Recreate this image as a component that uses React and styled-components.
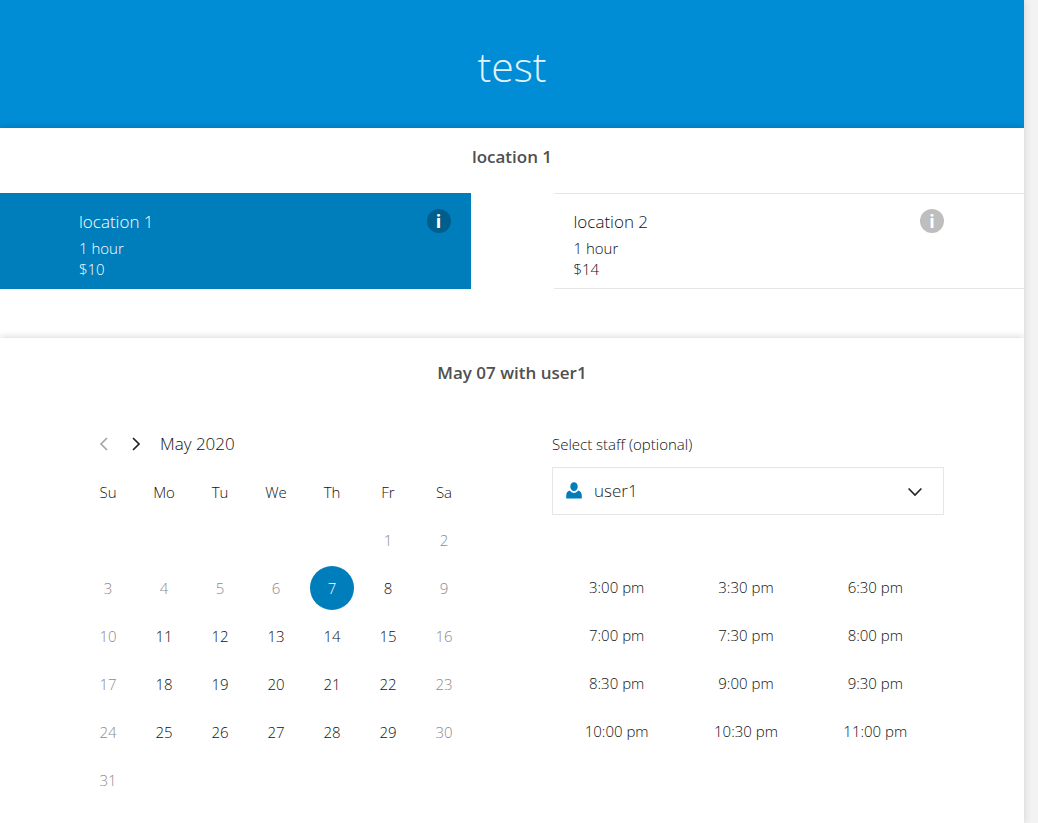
import React, { useState } from "react";
import styled, { createGlobalStyle, css } from "styled-components";

const GlobalStyle = createGlobalStyle`
  *, *::before, *::after { box-sizing: border-box; }
  body {
    margin: 0;
    background: #f3f3f3;
    color: #111;
    font-family: "Open Sans", "Noto Sans", sans-serif;
    font-size: 15px;
    font-weight: 300;
    line-height: 20px;
  }
  button, select { font: inherit; color: inherit; }
`;

const Page = styled.main`
  margin-right: 14px;
  min-height: 100vh;
  display: flex;
  flex-direction: column;
  background: #fff;
  box-shadow: 0 0 8px rgba(0, 0, 0, 0.15);
`;

const Header = styled.header`
  height: 128px;
  display: flex;
  align-items: center;
  justify-content: center;
  padding-top: 4px;
  background: #008dd5;
`;

const BusinessName = styled.h1`
  margin: 0;
  color: #e2f3fc;
  font-size: 41px;
  font-weight: 300;
  line-height: 60px;
`;

const Section = styled.section`
  background: #fff;
  box-shadow: 0 0 8px rgba(0, 0, 0, 0.2);
  clip-path: inset(-8px 0 0 0);
  ${(p) => p.$grow && css`flex: 1;`}
`;

const SectionTitle = styled.h2`
  margin: 0;
  padding: ${(p) => (p.$roomy ? "23px 0 35px" : "17px 0 24px")};
  color: #505050;
  font-size: 17px;
  font-weight: 600;
  line-height: 24px;
  text-align: center;
`;

const Locations = styled.div`
  display: grid;
  grid-template-columns: 1fr 1fr;
  column-gap: 83px;
  padding-bottom: 49px;
`;

const LocationCard = styled.article`
  height: 96px;
  display: flex;
  align-items: flex-start;
  justify-content: space-between;
  padding: 15px 20px;
  border-top: 1px solid #e6e6e6;
  border-bottom: 1px solid #e6e6e6;
  &:first-child { padding-left: 79px; }
  &:last-child { padding-right: 80px; }
  ${(p) => p.$selected && css`
    color: #fff;
    background: #007dbb;
    border-color: #007dbb;
  `}
`;

const LocationName = styled.h3`
  margin: 0 0 3px;
  font-size: 17px;
  font-weight: 300;
  line-height: 26px;
`;

const LocationDetail = styled.p`
  margin: 0;
  line-height: 21px;
`;

const InfoButton = styled.button`
  width: 24px;
  height: 24px;
  padding: 0;
  border: 0;
  border-radius: 50%;
  color: #fff;
  background: ${(p) => (p.$selected ? "#005e8c" : "#bebebe")};
  font-size: 18px;
  font-weight: 700;
  line-height: 22px;
`;

const Booking = styled.div`
  display: grid;
  grid-template-columns: 1fr 1fr;
  column-gap: 80px;
  padding: 0 80px 16px;
`;

const MonthBar = styled.div`
  height: 48px;
  display: flex;
  align-items: center;
  padding-left: 8px;
`;

const MonthButton = styled.button`
  width: 32px;
  height: 32px;
  display: grid;
  place-items: center;
  padding: 0;
  border: 0;
  background: none;
  color: ${(p) => (p.disabled ? "#a6a6a6" : "#222")};
`;

const MonthName = styled.h3`
  margin: 0 0 0 8px;
  font-size: 17px;
  font-weight: 300;
  line-height: 24px;
`;

const Calendar = styled.table`
  width: 100%;
  table-layout: fixed;
  border-collapse: collapse;
`;

const Weekday = styled.th`
  height: 48px;
  padding: 0;
  font-weight: 300;
  text-align: center;
`;

const DayCell = styled.td`
  height: 48px;
  padding: 0;
  text-align: center;
`;

const DayButton = styled.button`
  width: 44px;
  height: 44px;
  display: block;
  margin: 0 auto;
  padding: 0;
  border: 0;
  border-radius: 50%;
  background: ${(p) => (p.$selected ? "#007dbb" : "none")};
  color: ${(p) => (p.$selected ? "#fff" : p.disabled ? "#8c8c8c" : "#111")};
`;

const StaffLabel = styled.label`
  display: block;
  padding: 14px 0 13px;
`;

const StaffField = styled.div`
  position: relative;
  color: #222;
`;

const StaffSelect = styled.select`
  width: 100%;
  height: 48px;
  padding: 0 40px 0 41px;
  border: 1px solid #e6e6e6;
  border-radius: 0;
  background: #fff;
  font-size: 17px;
  appearance: none;
`;

const PersonIcon = styled.svg`
  position: absolute;
  top: 15px;
  left: 14px;
  color: #007dbb;
  pointer-events: none;
`;

const ChevronIcon = styled.svg`
  position: absolute;
  top: 20px;
  right: 22px;
  pointer-events: none;
`;

const TimeGrid = styled.div`
  display: grid;
  grid-template-columns: repeat(3, 1fr);
  grid-auto-rows: 48px;
  padding: 48px 4px 0 0;
`;

const TimeButton = styled.button`
  padding: 0;
  border: 0;
  background: none;
`;

const weekdays = ["Su", "Mo", "Tu", "We", "Th", "Fr", "Sa"];
const firstWeekday = 5;
const daysInMonth = 31;
const openDays = [7, 8, 11, 12, 13, 14, 15, 18, 19, 20, 21, 22, 25, 26, 27, 28, 29];
const times = [
  "3:00 pm", "3:30 pm", "6:30 pm",
  "7:00 pm", "7:30 pm", "8:00 pm",
  "8:30 pm", "9:00 pm", "9:30 pm",
  "10:00 pm", "10:30 pm", "11:00 pm",
];
const locations = [
  { name: "location 1", duration: "1 hour", price: "$10" },
  { name: "location 2", duration: "1 hour", price: "$14" },
];

const weeks = Array.from({ length: 6 }, (_, week) =>
  Array.from({ length: 7 }, (_, column) => {
    const day = week * 7 + column - firstWeekday + 1;
    return day > 0 && day <= daysInMonth ? day : null;
  })
);

function MonthArrow({ points }) {
  return (
    <svg width="10" height="16" viewBox="0 0 10 16" fill="none" stroke="currentColor" strokeWidth="1.7" aria-hidden="true">
      <polyline points={points} />
    </svg>
  );
}

export default function App() {
  const [selectedDay, setSelectedDay] = useState(7);

  return (
    <>
      <GlobalStyle />
      <Page>
        <Header>
          <BusinessName>test</BusinessName>
        </Header>
        <Section>
          <SectionTitle>location 1</SectionTitle>
          <Locations>
            {locations.map((location, index) => (
              <LocationCard key={location.name} $selected={index === 0}>
                <div>
                  <LocationName>{location.name}</LocationName>
                  <LocationDetail>{location.duration}</LocationDetail>
                  <LocationDetail>{location.price}</LocationDetail>
                </div>
                <InfoButton type="button" $selected={index === 0}>i</InfoButton>
              </LocationCard>
            ))}
          </Locations>
        </Section>
        <Section $grow>
          <SectionTitle $roomy>May 07 with user1</SectionTitle>
          <Booking>
            <div>
              <MonthBar>
                <MonthButton type="button" disabled aria-label="Previous month">
                  <MonthArrow points="8,2 2,8 8,14" />
                </MonthButton>
                <MonthButton type="button" aria-label="Next month">
                  <MonthArrow points="2,2 8,8 2,14" />
                </MonthButton>
                <MonthName>May 2020</MonthName>
              </MonthBar>
              <Calendar>
                <thead>
                  <tr>
                    {weekdays.map((name) => (
                      <Weekday key={name} scope="col">{name}</Weekday>
                    ))}
                  </tr>
                </thead>
                <tbody>
                  {weeks.map((week, index) => (
                    <tr key={index}>
                      {week.map((day, column) => (
                        <DayCell key={column}>
                          {day && (
                            <DayButton
                              type="button"
                              disabled={!openDays.includes(day)}
                              $selected={day === selectedDay}
                              onClick={() => setSelectedDay(day)}
                            >
                              {day}
                            </DayButton>
                          )}
                        </DayCell>
                      ))}
                    </tr>
                  ))}
                </tbody>
              </Calendar>
            </div>
            <div>
              <StaffLabel htmlFor="staff">Select staff (optional)</StaffLabel>
              <StaffField>
                <StaffSelect id="staff" defaultValue="user1">
                  <option value="user1">user1</option>
                </StaffSelect>
                <PersonIcon width="16" height="17" viewBox="0 0 16 17" fill="currentColor" aria-hidden="true">
                  <path d="M8 .3c2.200 0 3.700 1.700 3.700 4.100S10.100 9 8 9 4.300 6.800 4.300 4.400 5.800.3 8 .3z" />
                  <path d="M3.700 8.600C5 10.300 6.300 11 8 11s3-.7 4.300-2.400c2.200.5 3.500 2.400 3.500 5.200V16.500H.2V13.800c0-2.800 1.300-4.700 3.500-5.200z" />
                </PersonIcon>
                <ChevronIcon width="14" height="10" viewBox="0 0 14 10" fill="none" stroke="currentColor" strokeWidth="1.600" aria-hidden="true">
                  <polyline points="0.600,1.500 7,8 13.400,1.500" />
                </ChevronIcon>
              </StaffField>
              <TimeGrid>
                {times.map((time) => (
                  <TimeButton key={time} type="button">{time}</TimeButton>
                ))}
              </TimeGrid>
            </div>
          </Booking>
        </Section>
      </Page>
    </>
  );
}
